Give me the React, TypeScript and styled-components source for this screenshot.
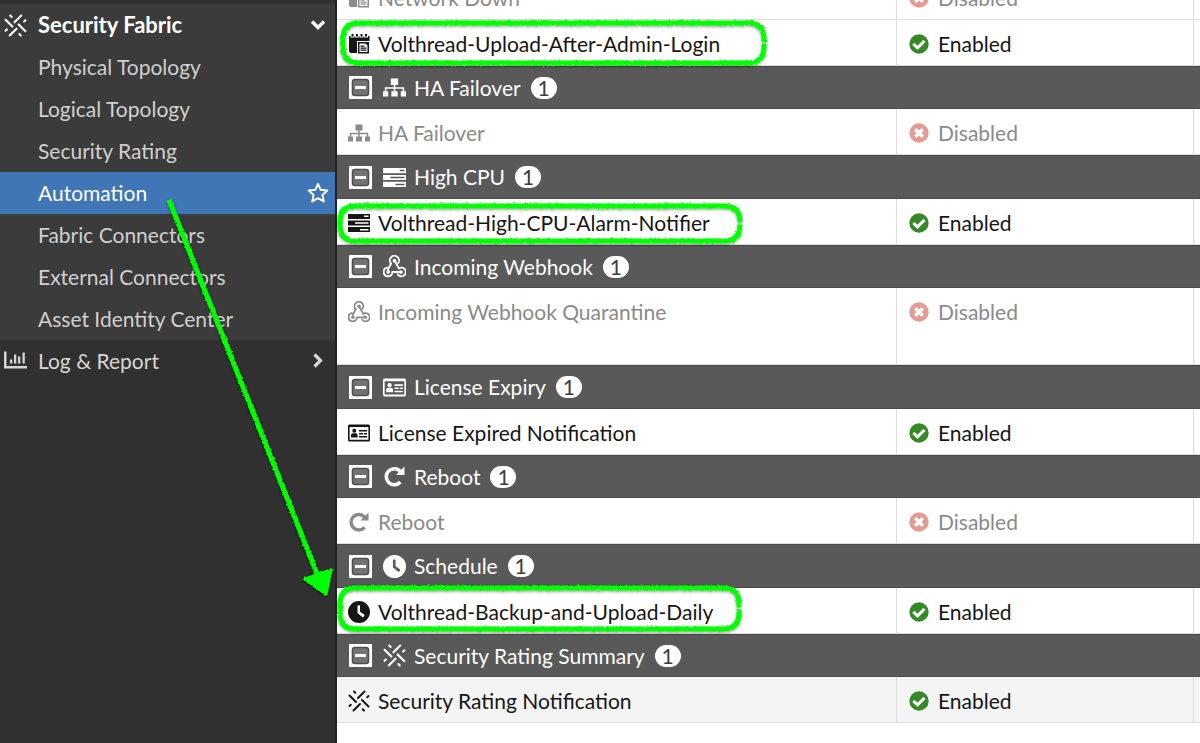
import React from "react";
import styled, { createGlobalStyle, css } from "styled-components";

const GlobalStyle = createGlobalStyle`
  * { box-sizing: border-box; }
  body {
    margin: 0;
    background: #ffffff;
    font-family: Lato, "Liberation Sans", sans-serif;
    font-size: 21px;
    line-height: 26px;
    color: #161616;
  }
`;

const Page = styled.div`
  position: relative;
  display: flex;
  height: 100vh;
  overflow: hidden;
`;

const Sidebar = styled.nav`
  flex: 0 0 337px;
  padding-top: 4px;
  background: #303030;
  border-right: 2px solid #222222;
`;

const Section = styled.div`
  background: #3b3b3b;
`;

const MenuButton = styled.button<{ $open?: boolean }>`
  display: grid;
  grid-template-columns: 34px 1fr 22px;
  align-items: center;
  width: 100%;
  height: 42px;
  padding: 0 6px 0 4px;
  border: 0;
  background: transparent;
  color: ${(p) => (p.$open ? "#ffffff" : "#d6d6d6")};
  font: inherit;
  font-size: ${(p) => (p.$open ? 22 : 21)}px;
  font-weight: ${(p) => (p.$open ? 700 : 400)};
  text-align: left;
  svg { display: block; }
`;

const SubList = styled.ul`
  margin: 0;
  padding: 0;
  list-style: none;
`;

const SubLink = styled.a<{ $active?: boolean }>`
  display: flex;
  align-items: center;
  justify-content: space-between;
  height: 42px;
  padding: 0 6px 0 38px;
  color: #d0d0d0;
  text-decoration: none;
  ${(p) => p.$active && css`
    background: #4076b5;
    color: #ffffff;
  `}
`;

const Main = styled.main`
  flex: 1;
  min-width: 0;
  overflow: hidden;
`;

const Table = styled.table`
  width: 100%;
  margin-top: -26px;
  table-layout: fixed;
  border-collapse: separate;
  border-spacing: 0;
`;

const StatusCol = styled.col`width: 297px;`;
const EdgeCol = styled.col`width: 6px;`;

const GroupBody = styled.tbody`
  &:nth-of-type(odd) > tr:first-child > th { height: 44px; }
`;

const GroupCell = styled.th`
  height: 43px;
  padding: 0 12px;
  background: #595959;
  border-top: 1px solid #4a4a4a;
  border-bottom: 1px solid #4a4a4a;
  color: #ffffff;
  font-weight: 400;
  text-align: left;
`;

const GroupTitle = styled.div`
  display: flex;
  align-items: center;
  svg { display: block; }
`;

const Toggle = styled.button`
  display: block;
  width: 23px;
  height: 23px;
  margin-right: 11px;
  padding: 0;
  border: 0;
  background: #ffffff;
`;

const GroupName = styled.span`
  margin: 0 10px 0 8px;
`;

const Count = styled.span`
  width: 26px;
  height: 22px;
  border-radius: 11px;
  background: #ffffff;
  color: #3c3c3c;
  line-height: 22px;
  text-align: center;
`;

const Row = styled.tr<{ $off?: boolean; $shade?: boolean; $tall?: boolean }>`
  color: ${(p) => (p.$off ? "#8a8a8a" : "#161616")};
  background: ${(p) => (p.$shade ? "#f4f4f4" : "#ffffff")};
  > td { height: ${(p) => (p.$tall ? 77 : 46)}px; }
`;

const Cell = styled.td`
  padding: 11px 11px 0;
  border-right: 1px solid #dddddd;
  border-bottom: 1px solid #dddddd;
  vertical-align: top;
  & + & { padding-left: 12px; }
  &:last-child { border-right: 0; padding: 0; }
`;

const Item = styled.div<{ $gap: number }>`
  display: flex;
  align-items: center;
  gap: ${(p) => p.$gap}px;
  white-space: nowrap;
  svg { display: block; }
`;

const Annotations = styled.svg`
  position: absolute;
  top: 0;
  left: 0;
  pointer-events: none;
`;

type Kind = "event" | "sitemap" | "cpu" | "webhook" | "card" | "reboot" | "clock" | "fabric";

function Icon({ kind, size = 22 }: { kind: Kind; size?: number }) {
  const line = { fill: "none", stroke: "currentColor", strokeWidth: 2, strokeLinecap: "round" as const };
  return (
    <svg width={size} height={size} viewBox="0 0 22 22" fill="currentColor" aria-hidden="true">
      {kind === "event" && (
        <>
          <path d="M3.500 1h2v2.500h-2zM8 1h2v2.500H8zM12.500 1h2v2.500h-2zM17 1h2v2.500h-2z" />
          <path d="M1 3h1.500v1.500h4V3h.5v1.500h4V3h.5v1.500h4V3h.5v1.500h4V3h1.500v5H9v12H2.500L1 18.500z" />
          <path fillRule="evenodd" d="M10 9h11v11.500H10zM11.500 10.500V19h8v-6.500l-2-2z" />
          <path d="M12.500 12.500h4v1.200h-4zM12.500 14.500h6v1.200h-6zM12.500 16.500h6v1.200h-6z" />
        </>
      )}
      {kind === "sitemap" && (
        <>
          <path d="M7.500 2.500h7v6h-7zM0 14.500h5v5H0zM8 14.500h6v5H8zM17 14.500h5v5h-5z" />
          <path d="M11 8v7M2.500 15v-3.500h17V15" fill="none" stroke="currentColor" strokeWidth="1.500" />
        </>
      )}
      {kind === "cpu" && (
        <path fillRule="evenodd" d="M0 2h22v5H0zM16 3.500V5h4.500V3.500zM0 8.500h22v5H0zM7 10.300v1.500h13.500v-1.500zM0 15h22v5H0zM12 17v1.500h8.500V17z" />
      )}
      {kind === "webhook" && (
        <>
          <g {...line} strokeWidth="1.800">
            <path d="M7.700 8.200A4.400 4.400 0 1 1 14.600 7.600" />
            <path d="M7.700 8.200 4.700 14" />
            <path d="M11.300 5.800 15.200 12.800" />
            <path d="M15.200 12.800A4.200 4.200 0 1 1 14 18.400" />
            <path d="M3.800 12A4.200 4.200 0 1 0 9 16.300H17" />
          </g>
          <circle cx="11" cy="5.400" r="1.800" />
          <circle cx="4.900" cy="16.200" r="1.800" />
          <circle cx="17.200" cy="16.300" r="1.800" />
        </>
      )}
      {kind === "card" && (
        <>
          <path fillRule="evenodd" d="M1.500 2.500h19a1.500 1.500 0 0 1 1.500 1.500v14a1.500 1.500 0 0 1-1.500 1.500h-19A1.500 1.500 0 0 1 0 18V4a1.500 1.500 0 0 1 1.500-1.500zM1.600 5v12.800h18.800V5z" />
          <circle cx="6.300" cy="8.800" r="2" />
          <path d="M3 15.500v-2.300q0-2 2-2h2.600q2 0 2 2v2.300zM11 8h8v1.500h-8zM11 11h4v1.500h-4zM16 11h3v1.500h-3zM11 14h8v1.500h-8z" />
        </>
      )}
      {kind === "reboot" && (
        <>
          <path d="M16.600 16.300A7.700 7.700 0 1 1 16.800 6.400" fill="none" stroke="currentColor" strokeWidth="3.400" />
          <path d="M20.500 1.500V9.500H12.500z" />
        </>
      )}
      {kind === "clock" && (
        <path fillRule="evenodd" d="M11 0a11 11 0 1 1 0 22 11 11 0 0 1 0-22zM9.500 5v7l4.800 3.900q.8.500 1.300-.1l.7-1q.4-.7-.2-1.200L12 10.700V5q0-.8-.8-.8h-.9q-.8 0-.8.8z" />
      )}
      {kind === "fabric" && (
        <path {...line} d="M16.500 1.500 10 8M20.500 16.500 14 10M5.500 20.500 12 14M1.500 5.500 8 12M6 1.500 7.300 2.800M20.500 6 19.200 7.300M16 20.500 14.700 19.200M1.500 16 2.800 14.700" />
      )}
    </svg>
  );
}

function StatusIcon({ on }: { on: boolean }) {
  return (
    <svg width="20" height="20" viewBox="0 0 20 20" aria-hidden="true">
      <circle cx="10" cy="10" r="9.700" fill={on ? "#358a26" : "#e39b94"} />
      <path
        d={on ? "M4.300 9.800 8.500 13.800 15.500 6.900" : "M6.200 6.200 13.800 13.800M13.800 6.200 6.200 13.800"}
        fill="none"
        stroke="#ffffff"
        strokeWidth={on ? 3 : 3.4}
      />
    </svg>
  );
}

interface Stitch {
  name: string;
  icon: Kind;
  on: boolean;
  shade?: boolean;
  tall?: boolean;
}

function StitchRow({ name, icon, on, shade, tall }: Stitch) {
  return (
    <Row $off={!on} $shade={shade} $tall={tall}>
      <Cell><Item $gap={8}><Icon kind={icon} />{name}</Item></Cell>
      <Cell><Item $gap={9}><StatusIcon on={on} />{on ? "Enabled" : "Disabled"}</Item></Cell>
      <Cell />
    </Row>
  );
}

const groups: { title: string; row: Stitch }[] = [
  { title: "HA Failover", row: { name: "HA Failover", icon: "sitemap", on: false } },
  { title: "High CPU", row: { name: "Volthread-High-CPU-Alarm-Notifier", icon: "cpu", on: true } },
  { title: "Incoming Webhook", row: { name: "Incoming Webhook Quarantine", icon: "webhook", on: false, tall: true } },
  { title: "License Expiry", row: { name: "License Expired Notification", icon: "card", on: true } },
  { title: "Reboot", row: { name: "Reboot", icon: "reboot", on: false } },
  { title: "Schedule", row: { name: "Volthread-Backup-and-Upload-Daily", icon: "clock", on: true } },
  { title: "Security Rating Summary", row: { name: "Security Rating Notification", icon: "fabric", on: true, shade: true } },
];

const links = [
  "Physical Topology",
  "Logical Topology",
  "Security Rating",
  "Automation",
  "Fabric Connectors",
  "External Connectors",
  "Asset Identity Center",
];

/* Hand-drawn outline with a small break on its right side. */
function outline(x: number, y: number, w: number, h: number) {
  const r = 16;
  const mid = y + h / 2;
  return `M${x + w} ${mid + 1}V${y + h - r}Q${x + w} ${y + h} ${x + w - r} ${y + h}H${x + r}Q${x} ${y + h} ${x} ${y + h - r}V${y + r}Q${x} ${y} ${x + r} ${y}H${x + w - r}Q${x + w} ${y} ${x + w} ${y + r}V${mid - 1}`;
}

export default function App() {
  return (
    <>
      <GlobalStyle />
      <Page>
        <Sidebar>
          <Section>
            <MenuButton $open type="button">
              <Icon kind="fabric" size={23} />
              <span>Security Fabric</span>
              <svg width="22" height="22" viewBox="0 0 22 22" aria-hidden="true">
                <path d="M5 7.500 11 13.500 17 7.500" fill="none" stroke="currentColor" strokeWidth="3.400" />
              </svg>
            </MenuButton>
            <SubList>
              {links.map((label) => (
                <li key={label}>
                  <SubLink href="#" $active={label === "Automation"}>
                    {label}
                    {label === "Automation" && (
                      <svg width="22" height="22" viewBox="0 0 22 22" aria-hidden="true">
                        <path d="M11 1.800 13.700 7.800 20.300 8.500 15.400 13 16.800 19.500 11 16.200 5.200 19.500 6.600 13 1.700 8.500 8.300 7.800Z" fill="none" stroke="currentColor" strokeWidth="1.900" strokeLinejoin="round" />
                      </svg>
                    )}
                  </SubLink>
                </li>
              ))}
            </SubList>
          </Section>
          <MenuButton type="button">
            <svg width="23" height="23" viewBox="0 0 23 23" fill="currentColor" aria-hidden="true">
              <path d="M0 1.500h2.500v14.500H23v2.500H0zM6 9.500h2.300v4H6zM10 4.500h2.300v9H10zM14 6.500h2.300v7H14zM18.500 2.500h2.300v11h-2.300z" />
            </svg>
            <span>Log &amp; Report</span>
            <svg width="22" height="22" viewBox="0 0 22 22" aria-hidden="true">
              <path d="M7.500 4.500 13.500 10.500 7.500 16.500" fill="none" stroke="currentColor" strokeWidth="3.200" />
            </svg>
          </MenuButton>
        </Sidebar>
        <Main>
          <Table>
            <colgroup><col /><StatusCol /><EdgeCol /></colgroup>
            <tbody>
              <StitchRow name="Network Down" icon="event" on={false} />
              <StitchRow name="Volthread-Upload-After-Admin-Login" icon="event" on />
            </tbody>
            {groups.map(({ title, row }) => (
              <GroupBody key={title}>
                <tr>
                  <GroupCell colSpan={3} scope="rowgroup">
                    <GroupTitle>
                      <Toggle type="button" aria-label={`Collapse ${title}`}>
                        <svg width="23" height="23" viewBox="0 0 23 23" aria-hidden="true">
                          <rect x="3.500" y="3.500" width="16" height="16" rx="2.500" fill="#737373" stroke="#505050" strokeWidth="1.600" />
                          <path d="M6 10h11v3H6z" fill="#ffffff" />
                        </svg>
                      </Toggle>
                      <Icon kind={row.icon} size={23} />
                      <GroupName>{title}</GroupName>
                      <Count>1</Count>
                    </GroupTitle>
                  </GroupCell>
                </tr>
                <StitchRow {...row} />
              </GroupBody>
            ))}
          </Table>
        </Main>
        <Annotations width="1200" height="743" viewBox="0 0 1200 743" aria-hidden="true">
          <defs>
            <filter id="rough" filterUnits="userSpaceOnUse" x="0" y="0" width="1200" height="743">
              <feTurbulence type="fractalNoise" baseFrequency="0.45" numOctaves="2" seed="4" result="noise" />
              <feDisplacementMap in="SourceGraphic" in2="noise" scale="3" xChannelSelector="R" yChannelSelector="G" result="ink" />
              <feDropShadow in="ink" dx="0" dy="1" stdDeviation="1.500" floodColor="#000000" floodOpacity="0.45" />
            </filter>
          </defs>
          <g filter="url(#rough)" fill="none" stroke="#00ff00" strokeWidth="5">
            <path d={outline(343, 23, 421, 40)} />
            <path d={outline(340, 206, 400, 35)} />
            <path d={outline(340, 588, 399, 41)} />
            <path d="M169 200 318 576" />
            <path d="M305 579 331 570 326 594Z" fill="#00ff00" strokeWidth="3" strokeLinejoin="round" />
          </g>
        </Annotations>
      </Page>
    </>
  );
}
